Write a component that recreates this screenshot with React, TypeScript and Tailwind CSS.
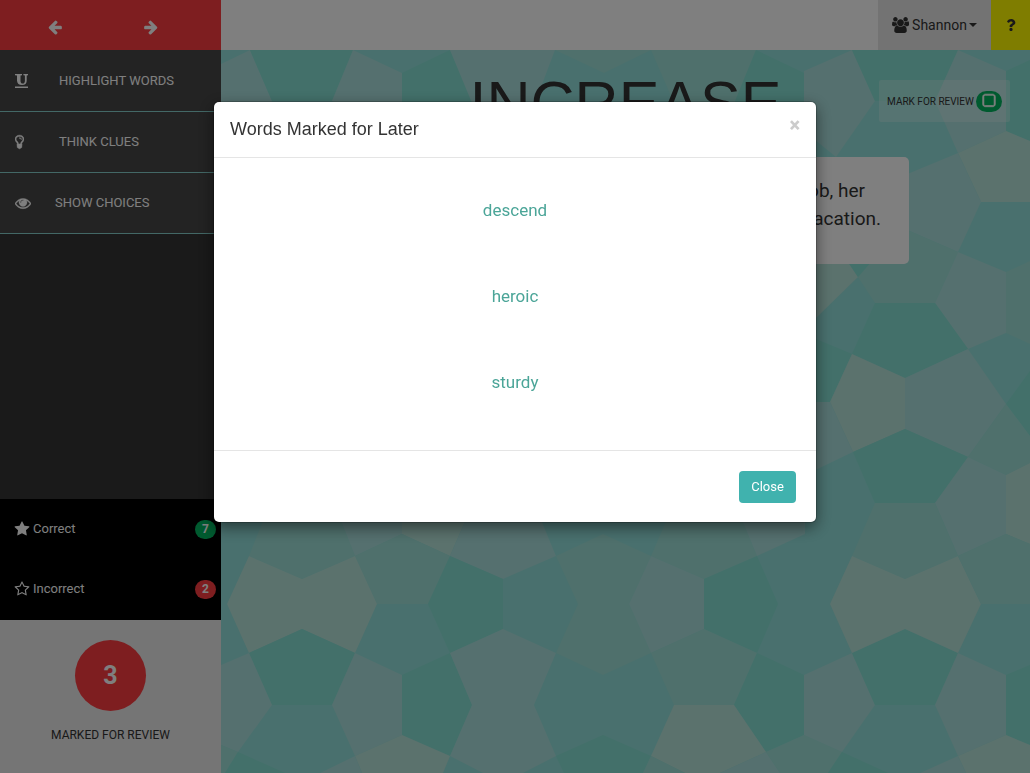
import React from "react";
import { FaQuestion } from "react-icons/fa";

const GREEN = "#86e0d4";
const TEAL = "#92e0dc";
const GREY = "#aae0de";
const OLIVE = "#b6e4da";
const MINT = "#9ee0d8";

const tiles: [string, string][] = [
  // top row
  [GREY, "221,64 250,50 272,101 260,130 221,130"],
  [GREEN, "250,50 353,50 332,101 272,101"],
  [GREY, "353,50 402,73 402,130 332,101"],
  [GREEN, "402,73 450,50 472,101 450,152 402,130"],
  [GREY, "450,50 555,50 535,103 472,103"],
  [MINT, "555,50 651,50 604,73"],
  [MINT, "651,50 756,50 735,103 674,103"],
  [GREEN, "756,50 804,73 804,131 757,152 735,101"],
  [GREY, "804,71 852,50 875,101 836,157 804,131"],
  [GREEN, "852,50 958,50 935,101 875,101"],
  [GREY, "958,50 1006,71 1006,131 958,153 935,101"],
  [GREEN, "1006,71 1030,60 1030,141 1006,131"],
  // right column
  [OLIVE, "958,153 1006,131 1030,141 1030,202 981,202"],
  [GREY, "905,175 958,153 981,202 958,252 905,229"],
  [MINT, "858,277 890,240 905,229 958,252 935,303 875,303"],
  [OLIVE, "816,230 830,235 858,277 816,318"],
  [GREEN, "840,250 890,240 858,277"],
  [GREY, "958,252 1006,272 1006,333 968,349 935,303"],
  [MINT, "1006,272 1030,261 1030,344 1006,333"],
  [GREEN, "875,303 935,303 968,349 905,378 852,354"],
  [GREEN, "800,332 816,339 852,354 830,402 800,402"],
  [GREY, "905,378 968,349 1006,404 968,457 905,429"],
  [OLIVE, "852,354 905,378 905,429 853,452 830,402"],
  [GREY, "800,402 830,402 853,452 805,475"],
  [GREEN, "1006,404 1030,371 1030,436"],
  [MINT, "1006,404 1030,436 1030,463 1006,475 968,457"],
  [GREEN, "853,452 905,429 968,457 935,503 875,503"],
  [GREY, "968,457 1006,475 1006,534 958,556 935,503"],
  [OLIVE, "1006,475 1030,463 1030,544 1006,534"],
  [MINT, "875,503 935,503 958,556 905,579 852,556"],
  // lower left
  [MINT, "270,503 334,503 355,556 302,579 249,556"],
  [GREY, "334,503 402,480 402,534 355,556"],
  [OLIVE, "402,480 473,503 450,556 402,534"],
  [GREY, "473,503 534,503 556,556 503,579 450,556"],
  [MINT, "355,556 402,534 450,556 428,604 377,604"],
  [OLIVE, "249,556 302,579 355,556 377,604 355,653 302,629 249,653 227,604"],
  [GREEN, "450,556 503,579 503,629 450,653 428,604"],
  [MINT, "556,556 603,534 651,556 629,604 651,653 603,675 556,653 578,604"],
  [GREEN, "249,653 302,629 355,653 332,705 272,705"],
  [GREY, "221,665 249,653 272,705 238,752 221,745"],
  [MINT, "221,745 238,752 225,773 221,773"],
  [GREEN, "238,752 285,773 225,773"],
  [GREY, "355,653 402,675 402,735 355,756 332,705"],
  [GREEN, "402,675 450,653 472,705 450,756 402,735"],
  [OLIVE, "402,735 450,756 443,773 362,773 355,756"],
  [GREY, "355,756 362,773 320,773"],
  [GREY, "450,653 503,629 556,653 534,705 556,756 523,773 483,773 450,756 472,705"],
  [GREEN, "603,735 651,756 643,773 564,773 556,756"],
  // lower right
  [MINT, "674,503 735,503 757,556 704,579 651,556"],
  [GREY, "735,503 805,480 805,534 757,556"],
  [GREY, "651,556 704,579 704,629 651,653 629,604"],
  [GREEN, "704,579 757,556 778,604 757,653 704,629"],
  [MINT, "704,629 757,653 734,705 674,705 651,653"],
  [GREEN, "757,653 804,675 804,735 766,752 734,705"],
  [OLIVE, "674,705 734,705 766,752 720,773 685,773 651,756"],
  [MINT, "651,756 685,773 643,773"],
  [GREY, "766,752 780,773 720,773"],
  [MINT, "804,735 842,752 828,773 780,773 766,752"],
  [GREEN, "842,752 888,773 828,773"],
  [GREY, "804,675 852,653 875,705 842,752 804,735"],
  [GREEN, "852,653 905,629 958,653 935,705 875,705"],
  [OLIVE, "852,556 905,579 958,556 981,604 958,653 905,629 852,653 830,604"],
  [MINT, "958,556 1006,534 1030,544 1030,604 981,604"],
  [GREY, "958,653 1006,675 1006,735 958,756 935,705"],
  [GREEN, "1006,675 1030,665 1030,745 1006,735"],
  [OLIVE, "1006,735 1030,745 1030,773 966,773 958,756"],
  [GREY, "958,756 966,773 920,773"],
];

const icons = {
  arrowLeft:
    "M1664 896v128q0 53-32.5 90.5t-84.5 37.5h-704l293 294q38 36 38 90t-38 90l-75 76q-37 37-90 37-52 0-91-37l-651-652q-37-37-37-90 0-52 37-91l651-650q38-38 91-38 52 0 90 38l75 74q38 38 38 91t-38 91l-293 293h704q52 0 84.5 37.5t32.5 90.5z",
  arrowRight:
    "M1600 960q0 54-37 91l-651 651q-39 37-91 37-51 0-90-37l-75-75q-38-38-38-91t38-91l293-293h-704q-52 0-84.5-37.5t-32.5-90.5v-128q0-53 32.5-90.5t84.5-37.5h704l-293-294q-38-36-38-90t38-90l75-75q38-38 90-38 53 0 91 38l651 651q37 35 37 90z",
  underline:
    "M0 0h7v1.3l-1.5.3v5.2q0 2.8 2.2 2.8t2.2-2.8v-5.2l-1.5-.3v-1.3h4.600v1.3l-1.300.3v5.200q0 4.200-4.700 4.200t-5-4.200v-5.200l-2-.3zM0 12.500h13v1.500h-13z",
  bulb: "M1120 576q0 13-9.5 22.5t-22.5 9.5-22.5-9.5-9.5-22.5q0-46-54-71t-106-25q-13 0-22.5-9.5t-9.5-22.5 9.5-22.5 22.5-9.5q50 0 99.5 16t87 54 37.5 90zm160 0q0-72-34.5-134t-90-101.5-123-62-136.5-22.5-136.5 22.5-123 62-90 101.5-34.5 134q0 101 68 180 10 11 30.5 33t30.5 33q128 153 141 298h228q13-145 141-298 10-11 30.5-33t30.5-33q68-79 68-180zm128 0q0 155-103 268-45 49-74.5 87t-59.5 95.5-34 107.5q47 28 47 82 0 37-25 64 25 27 25 64 0 52-45 81 13 23 13 47 0 46-31.5 71t-77.5 25q-20 44-60 70t-87 26-87-26-60-70q-46 0-77.5-25t-31.5-71q0-24 13-47-45-29-45-81 0-37 25-64-25-27-25-64 0-54 47-82-4-50-34-107.5t-59.5-95.5-74.5-87q-103-113-103-268 0-99 44.5-184.5t117-142 164-89 186.5-32.5 186.5 32.5 164 89 117 142 44.5 184.5z",
  eye: "M1664 960q-152-236-381-353 61 104 61 225 0 185-131.5 316.5t-316.5 131.5-316.5-131.5-131.5-316.5q0-121 61-225-229 117-381 353 133 205 333.5 326.5t434.5 121.5 434.5-121.5 333.5-326.5zm-720-384q0-20-14-34t-34-14q-125 0-214.5 89.5t-89.5 214.5q0 20 14 34t34 14 34-14 14-34q0-86 61-147t147-61q20 0 34-14t14-34zm848 384q0 34-20 69-140 230-376.5 368.5t-499.5 138.5-499.5-139-376.5-368q-20-35-20-69t20-69q140-229 376.5-368t499.5-139 499.5 139 376.5 368q20 35 20 69z",
  star: "M1728 647q0 22-26 48l-363 354 86 500q1 7 1 20 0 21-10.5 35.5t-30.5 14.5q-19 0-40-12l-449-236-449 236q-22 12-40 12-21 0-31.5-14.5t-10.5-35.5q0-6 2-20l86-500-364-354q-25-27-25-48 0-37 56-46l502-73 225-455q19-41 49-41t49 41l225 455 502 73q56 9 56 46z",
  starOutline:
    "M1201 1004l306-297-422-62-189-382-189 382-422 62 306 297-73 421 378-199 377 199zm527-357q0 22-26 48l-363 354 86 500q1 7 1 20 0 50-41 50-19 0-40-12l-449-236-449 236q-22 12-40 12-21 0-31.5-14.5t-10.5-35.5q0-6 2-20l86-500-364-354q-25-27-25-48 0-37 56-46l502-73 225-455q19-41 49-41t49 41l225 455 502 73q56 9 56 46z",
  square:
    "M1312 256h-832q-66 0-113 47t-47 113v832q0 66 47 113t113 47h832q66 0 113-47t47-113v-832q0-66-47-113t-113-47zm288 160v832q0 119-84.5 203.5t-203.5 84.5h-832q-119 0-203.5-84.5t-84.5-203.5v-832q0-119 84.5-203.5t203.5-84.5h832q119 0 203.5 84.5t84.5 203.5z",
  users:
    "M593 896q-162 5-265 128h-134q-82 0-138-40.5t-56-118.5q0-353 124-353 6 0 43.5 21t97.5 42.5 119 21.5q67 0 133-23-5 37-5 66 0 159 93 286zm1071 637q0 120-73 189.5t-194 69.5h-874q-121 0-194-69.5t-73-189.5q0-53 3.5-103.5t14-109 26.5-108.5 43-97.5 62-81 85.5-53.5 111.5-20q10 0 43 21.5t73 48 107 48 135 21.5 135-21.5 107-48 73-48 43-21.5q61 0 111.5 20t85.5 53.5 62 81 43 97.5 26.5 108.5 14 109 3.5 103.5zm-1024-1277q0 106-75 181t-181 75-181-75-75-181 75-181 181-75 181 75 75 181zm704 384q0 159-112.5 271.5t-271.5 112.5-271.5-112.5-112.5-271.5 112.5-271.5 271.5-112.5 271.5 112.5 112.5 271.5zm576 225q0 78-56 118.5t-138 40.5h-134q-103-123-265-128 93-127 93-286 0-29-5-66 66 23 133 23 59 0 119-21.5t97.5-42.5 43.5-21q124 0 124 353zm-128-609q0 106-75 181t-181 75-181-75-75-181 75-181 181-75 181 75 75 181z",
};

const Icon = ({
  d,
  className,
  viewBox = "0 0 1792 1792",
}: {
  d: string;
  className?: string;
  viewBox?: string;
}) => (
  <svg
    className={className}
    viewBox={viewBox}
    fill="currentColor"
    aria-hidden="true"
  >
    <path d={d} />
  </svg>
);

const Pattern = () => (
  <svg
    className="absolute inset-0 h-full w-full"
    viewBox="221 50 809 723"
    preserveAspectRatio="xMinYMin slice"
    aria-hidden="true"
  >
    <rect x="221" y="50" width="809" height="723" fill={TEAL} />
    {tiles.map(([fill, points]) => (
      <polygon key={points} fill={fill} points={points} />
    ))}
  </svg>
);

const menu = [
  {
    text: "HIGHLIGHT WORDS",
    icon: icons.underline,
    viewBox: "0 0 13 14",
    size: "h-[14px] w-[13px]",
    gap: "w-11",
  },
  {
    text: "THINK CLUES",
    icon: icons.bulb,
    viewBox: "384 0 1024 1792",
    size: "h-4 w-[9px] stroke-current stroke-[60]",
    gap: "w-11",
  },
  {
    text: "SHOW CHOICES",
    icon: icons.eye,
    viewBox: "0 0 1792 1792",
    size: "size-4 stroke-current stroke-[40]",
    gap: "w-10",
  },
];

const Sidebar = () => (
  <aside className="flex w-[221px] shrink-0 flex-col bg-[#343434] text-white">
    <div className="flex h-[50px] items-center bg-[#fc3c40] pt-1">
      <button className="flex w-1/2 justify-center" aria-label="Previous">
        <Icon d={icons.arrowLeft} className="size-4" />
      </button>
      <button className="flex w-20 justify-center" aria-label="Next">
        <Icon d={icons.arrowRight} className="size-4" />
      </button>
    </div>
    <nav className="bg-[#464646] pt-px">
      {menu.map((item) => (
        <button
          key={item.text}
          className="flex h-[61px] w-full items-center border-b border-[#86d0cc] pl-[15px] text-[13px]"
        >
          <span className={item.gap}>
            <Icon
              d={item.icon}
              viewBox={item.viewBox}
              className={item.size}
            />
          </span>
          {item.text}
        </button>
      ))}
    </nav>
    <div className="mt-auto bg-black pb-px text-[13px]">
      <div className="flex h-[60px] items-center pr-[5px] pl-[14px]">
        <Icon d={icons.star} className="mr-[3px] size-4" />
        Correct
        <span className="ml-auto rounded-full bg-[#00b45f] px-[7px] text-[12px] leading-[19px] font-bold">
          7
        </span>
      </div>
      <div className="flex h-[60px] items-center pr-[5px] pl-[14px]">
        <Icon d={icons.starOutline} className="mr-[3px] size-4" />
        Incorrect
        <span className="ml-auto rounded-full bg-[#fc3c40] px-[7px] text-[12px] leading-[19px] font-bold">
          2
        </span>
      </div>
    </div>
    <div className="flex h-[153px] flex-col items-center bg-[#eaeaea] pt-5 text-[#333]">
      <div className="flex size-[71px] items-center justify-center rounded-full bg-[#fc3c40] text-[25px] font-bold text-white">
        3
      </div>
      <div className="mt-[14px] text-[12px] leading-5">MARKED FOR REVIEW</div>
    </div>
  </aside>
);

const Lesson = () => (
  <main className="flex min-w-0 flex-1 flex-col text-[#333]">
    <header className="flex h-[50px] justify-end bg-white">
      <button className="flex w-[113px] items-center justify-center bg-[#e7e7e7] text-[14px]">
        <Icon
          d={icons.users}
          viewBox="0 0 1920 1792"
          className="mr-[3px] h-4 w-[17px]"
        />
        Shannon
        <span className="ml-[2px] border-x-4 border-t-4 border-x-transparent border-t-[#333]" />
      </button>
      <button
        className="flex w-[39px] items-center justify-center bg-[#fffa00]"
        aria-label="Help"
      >
        <FaQuestion className="size-3" />
      </button>
    </header>
    <section className="relative flex-1">
      <Pattern />
      <div className="relative px-[121px] pt-5">
        <h1 className="text-center font-['Liberation_Sans',sans-serif] text-[61px] leading-[66px]">
          INCREASE
        </h1>
        <p className="mt-[21px] flex h-[107px] flex-col items-end rounded-[5px] bg-white px-7 pt-5 text-[19px] leading-7">
          <span className="pr-4">job, her</span>
          <span>vacation.</span>
        </p>
      </div>
      <button className="absolute top-[30px] right-5 flex h-[42px] w-[131px] items-center justify-center gap-[2px] rounded-[2px] bg-white/25 text-[10px]">
        MARK FOR REVIEW
        <span className="flex h-[21px] w-[26px] items-center justify-center rounded-full bg-[#00b45f] text-white">
          <Icon
            d={icons.square}
            className="size-4 stroke-current stroke-[80]"
          />
        </span>
      </button>
    </section>
  </main>
);

const words = ["descend", "heroic", "sturdy"];

const Modal = () => (
  <div className="fixed inset-0 flex items-start justify-center bg-black/50 pt-[102px]">
    <div
      role="dialog"
      aria-labelledby="modal-title"
      className="w-[602px] rounded-[5px] bg-white text-[#333] shadow-[0_0_0_1px_rgba(0,0,0,0.2),0_5px_15px_rgba(0,0,0,0.5)]"
    >
      <div className="flex h-14 items-start justify-between border-b border-[#e5e5e5] px-4 pt-[15px]">
        <h4
          id="modal-title"
          className="font-['Liberation_Sans',sans-serif] text-[18px] leading-6"
        >
          Words Marked for Later
        </h4>
        <button
          className="text-[20px] leading-4 font-black text-[#ccc]"
          aria-label="Close dialog"
        >
          ×
        </button>
      </div>
      <ul className="flex h-[292px] flex-col items-center gap-[61px] pt-10 text-[17px] leading-[25px]">
        {words.map((word) => (
          <li key={word}>
            <a href="#" className="text-[#4ba598]">
              {word}
            </a>
          </li>
        ))}
      </ul>
      <div className="flex h-[72px] items-center justify-end border-t border-[#e5e5e5] px-5">
        <button className="h-8 w-[57px] rounded-[4px] bg-[#40b2ae] text-[13px] text-white">
          Close
        </button>
      </div>
    </div>
  </div>
);

const App = () => {
  return (
    <div className="flex min-h-screen font-['Roboto',sans-serif]">
      <Sidebar />
      <Lesson />
      <Modal />
    </div>
  );
};

export default App;
